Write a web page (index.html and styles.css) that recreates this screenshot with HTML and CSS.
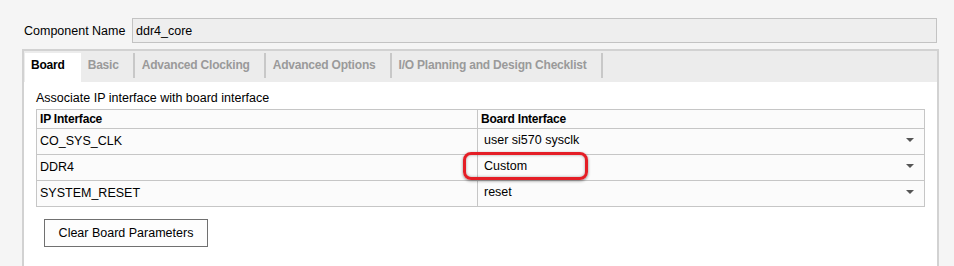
FILE: index.html
```html
<!DOCTYPE html>
<html lang="en">
<head>
  <meta charset="UTF-8" />
  <title>Customize IP - ddr4_core</title>
  <link rel="stylesheet" href="styles.css">
</head>
<body>
  <div class="name-row">
    <label class="name-label" for="compName">Component Name</label>
    <input class="name-input" id="compName" value="ddr4_core" readonly>
  </div>

  <div class="panel">
    <div class="tabs" role="tablist">
      <div class="tab active">Board</div>
      <div class="tab">Basic</div>
      <div class="tab">Advanced Clocking</div>
      <div class="tab">Advanced Options</div>
      <div class="tab">I/O Planning and Design Checklist</div>
    </div>

    <div class="tab-body">
      <div class="caption">Associate IP interface with board interface</div>
      <table class="board-table">
        <thead>
          <tr>
            <th class="col-ip">IP Interface</th>
            <th>Board Interface</th>
          </tr>
        </thead>
        <tbody>
          <tr>
            <td>CO_SYS_CLK</td>
            <td class="combo"><span class="combo-value">user si570 sysclk</span><span class="arrow"></span></td>
          </tr>
          <tr>
            <td>DDR4</td>
            <td class="combo">
              <span class="combo-value">Custom</span><span class="arrow"></span>
              <span class="highlight"></span>
            </td>
          </tr>
          <tr>
            <td>SYSTEM_RESET</td>
            <td class="combo"><span class="combo-value">reset</span><span class="arrow"></span></td>
          </tr>
        </tbody>
      </table>

      <button class="clear-btn">Clear Board Parameters</button>
    </div>
  </div>
</body>
</html>
```

FILE: styles.css
```css
body {
  margin: 0;
  background: #f5f5f5;
  font-family: 'Liberation Sans', Arial, sans-serif;
  font-size: 12.5px;
  color: #000;
  overflow: hidden;
}
.name-row {
  display: flex;
  align-items: center;
  padding: 18px 0 0 24px;
}
.name-label {
  width: 108px;
}
.name-input {
  box-sizing: border-box;
  width: 805px;
  height: 25px;
  margin: 0;
  padding: 0 0 0 3px;
  border: 1px solid #c3c3c3;
  background: #eeeeee;
  font: inherit;
  color: #000;
  outline: none;
}
.panel {
  margin: 6px 0 0 22px;
  width: 913px;
  height: 215px;
  border: 2px solid #d2d2d2;
  border-bottom: none;
  background: #fff;
  overflow: hidden;
}
.tabs {
  display: flex;
  align-items: flex-start;
  height: 29px;
  padding: 2px 0 0 1px;
  background: #ececec;
  font-size: 12px;
  font-weight: bold;
  letter-spacing: -0.2px;
}
.tab {
  line-height: 25px;
  padding: 0 14px 0 7px;
  color: #9a9a9a;
  border-right: 2px solid #c8c8c8;
  white-space: nowrap;
}
.tab.active {
  background: #fff;
  color: #000;
  border-right: none;
  padding: 0 16px 4px 6px;
}
.tab-body {
  padding: 9px 12px 0 12px;
}
.caption {
  line-height: 15px;
  margin-bottom: 3px;
}
.board-table {
  width: 100%;
  border-collapse: collapse;
  background: #fbfbfb;
}
.board-table th,
.board-table td {
  border: 1px solid #c6c6c6;
  padding: 0 0 0 3px;
  text-align: left;
  white-space: nowrap;
  line-height: 15px;
}
.board-table th {
  font-size: 12px;
  font-weight: bold;
  letter-spacing: -0.2px;
}
.board-table thead tr {
  height: 19px;
}
.board-table tbody tr {
  height: 26px;
}
.col-ip {
  width: 437px;
}
.board-table .combo {
  position: relative;
  padding: 0 10px 2px 6px;
}
.arrow {
  float: right;
  margin-top: 5px;
  width: 0;
  height: 0;
  border-left: 4px solid transparent;
  border-right: 4px solid transparent;
  border-top: 4px solid #555;
}
.highlight {
  position: absolute;
  left: -15px;
  top: -3px;
  width: 119px;
  height: 22px;
  border: 3px solid #e41e26;
  border-radius: 8px;
  box-shadow: 0 1px 3px rgba(0, 0, 0, 0.45), inset 0 0 3px rgba(0, 0, 0, 0.35);
  pointer-events: none;
}
.clear-btn {
  display: block;
  box-sizing: border-box;
  width: 164px;
  height: 28px;
  margin: 12px 0 0 8px;
  padding: 0;
  border: 1px solid #707070;
  border-radius: 0;
  background: #fdfdfd;
  font: inherit;
  color: #000;
}
```
